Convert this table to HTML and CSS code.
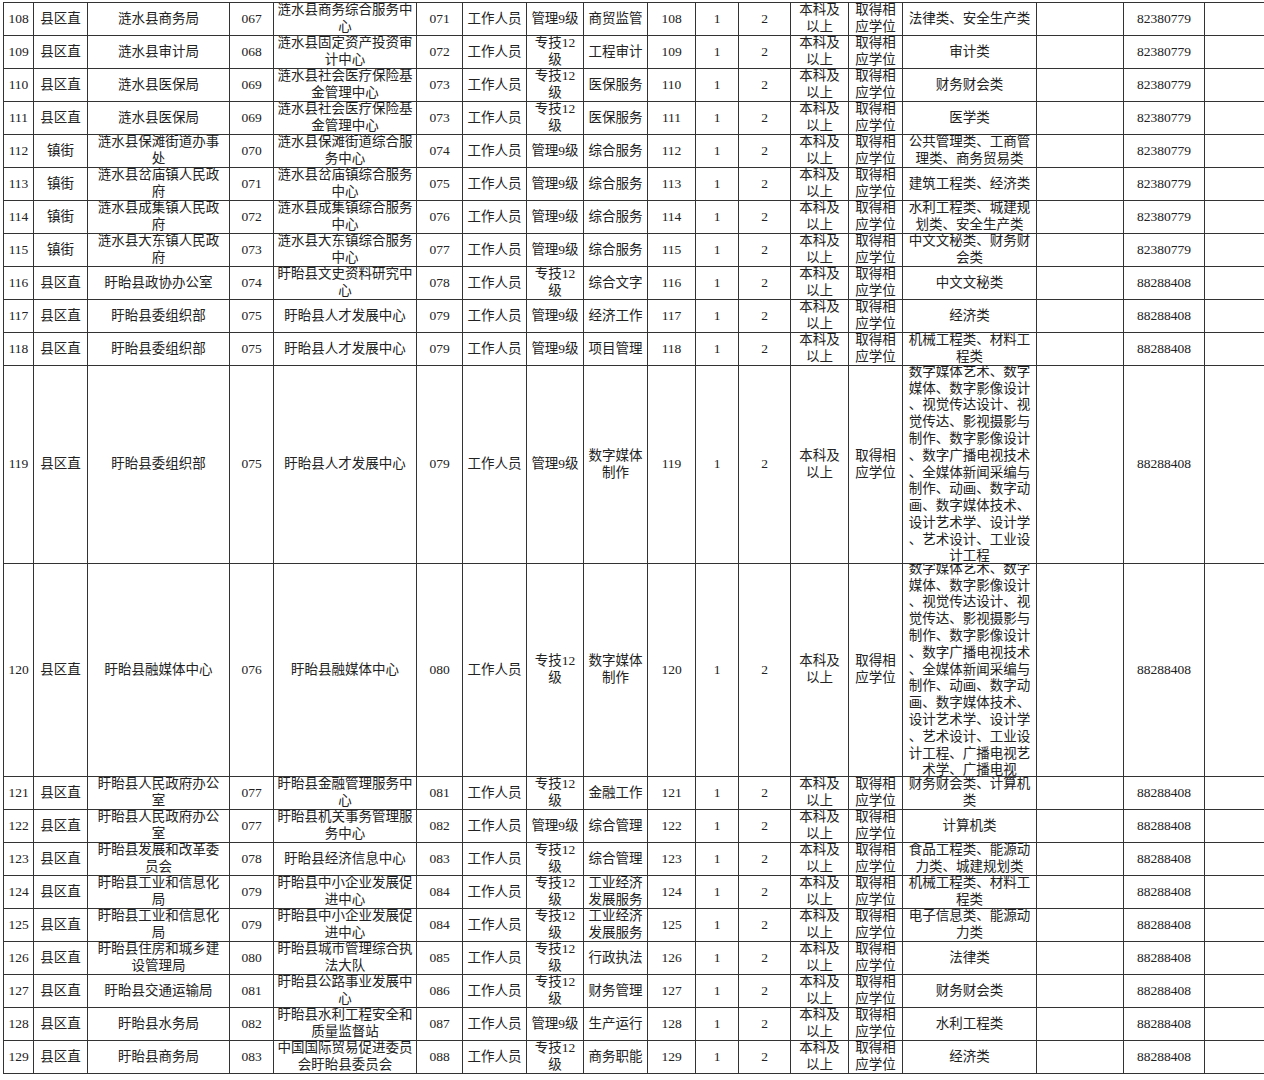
FILE: index.html
```html
<!DOCTYPE html>
<html lang="zh-CN">
<head>
<meta charset="utf-8">
<title>职位表</title>
<link rel="stylesheet" href="styles.css">
</head>
<body>
<div class="sheet">
<div>108</div><div>县区直</div><div>涟水县商务局</div><div>067</div><div>涟水县商务综合服务中<br>心</div><div>071</div><div>工作人员</div><div>管理9级</div><div>商贸监管</div><div>108</div><div>1</div><div>2</div><div>本科及<br>以上</div><div>取得相<br>应学位</div><div>法律类、安全生产类</div><div></div><div>82380779</div><div></div>
<div>109</div><div>县区直</div><div>涟水县审计局</div><div>068</div><div>涟水县固定资产投资审<br>计中心</div><div>072</div><div>工作人员</div><div>专技12<br>级</div><div>工程审计</div><div>109</div><div>1</div><div>2</div><div>本科及<br>以上</div><div>取得相<br>应学位</div><div>审计类</div><div></div><div>82380779</div><div></div>
<div>110</div><div>县区直</div><div>涟水县医保局</div><div>069</div><div>涟水县社会医疗保险基<br>金管理中心</div><div>073</div><div>工作人员</div><div>专技12<br>级</div><div>医保服务</div><div>110</div><div>1</div><div>2</div><div>本科及<br>以上</div><div>取得相<br>应学位</div><div>财务财会类</div><div></div><div>82380779</div><div></div>
<div>111</div><div>县区直</div><div>涟水县医保局</div><div>069</div><div>涟水县社会医疗保险基<br>金管理中心</div><div>073</div><div>工作人员</div><div>专技12<br>级</div><div>医保服务</div><div>111</div><div>1</div><div>2</div><div>本科及<br>以上</div><div>取得相<br>应学位</div><div>医学类</div><div></div><div>82380779</div><div></div>
<div>112</div><div>镇街</div><div>涟水县保滩街道办事<br>处</div><div>070</div><div>涟水县保滩街道综合服<br>务中心</div><div>074</div><div>工作人员</div><div>管理9级</div><div>综合服务</div><div>112</div><div>1</div><div>2</div><div>本科及<br>以上</div><div>取得相<br>应学位</div><div>公共管理类、工商管<br>理类、商务贸易类</div><div></div><div>82380779</div><div></div>
<div>113</div><div>镇街</div><div>涟水县岔庙镇人民政<br>府</div><div>071</div><div>涟水县岔庙镇综合服务<br>中心</div><div>075</div><div>工作人员</div><div>管理9级</div><div>综合服务</div><div>113</div><div>1</div><div>2</div><div>本科及<br>以上</div><div>取得相<br>应学位</div><div>建筑工程类、经济类</div><div></div><div>82380779</div><div></div>
<div>114</div><div>镇街</div><div>涟水县成集镇人民政<br>府</div><div>072</div><div>涟水县成集镇综合服务<br>中心</div><div>076</div><div>工作人员</div><div>管理9级</div><div>综合服务</div><div>114</div><div>1</div><div>2</div><div>本科及<br>以上</div><div>取得相<br>应学位</div><div>水利工程类、城建规<br>划类、安全生产类</div><div></div><div>82380779</div><div></div>
<div>115</div><div>镇街</div><div>涟水县大东镇人民政<br>府</div><div>073</div><div>涟水县大东镇综合服务<br>中心</div><div>077</div><div>工作人员</div><div>管理9级</div><div>综合服务</div><div>115</div><div>1</div><div>2</div><div>本科及<br>以上</div><div>取得相<br>应学位</div><div>中文文秘类、财务财<br>会类</div><div></div><div>82380779</div><div></div>
<div>116</div><div>县区直</div><div>盱眙县政协办公室</div><div>074</div><div>盱眙县文史资料研究中<br>心</div><div>078</div><div>工作人员</div><div>专技12<br>级</div><div>综合文字</div><div>116</div><div>1</div><div>2</div><div>本科及<br>以上</div><div>取得相<br>应学位</div><div>中文文秘类</div><div></div><div>88288408</div><div></div>
<div>117</div><div>县区直</div><div>盱眙县委组织部</div><div>075</div><div>盱眙县人才发展中心</div><div>079</div><div>工作人员</div><div>管理9级</div><div>经济工作</div><div>117</div><div>1</div><div>2</div><div>本科及<br>以上</div><div>取得相<br>应学位</div><div>经济类</div><div></div><div>88288408</div><div></div>
<div>118</div><div>县区直</div><div>盱眙县委组织部</div><div>075</div><div>盱眙县人才发展中心</div><div>079</div><div>工作人员</div><div>管理9级</div><div>项目管理</div><div>118</div><div>1</div><div>2</div><div>本科及<br>以上</div><div>取得相<br>应学位</div><div>机械工程类、材料工<br>程类</div><div></div><div>88288408</div><div></div>
<div>119</div><div>县区直</div><div>盱眙县委组织部</div><div>075</div><div>盱眙县人才发展中心</div><div>079</div><div>工作人员</div><div>管理9级</div><div>数字媒体<br>制作</div><div>119</div><div>1</div><div>2</div><div>本科及<br>以上</div><div>取得相<br>应学位</div><div>数字媒体艺术、数字<br>媒体、数字影像设计<br>、视觉传达设计、视<br>觉传达、影视摄影与<br>制作、数字影像设计<br>、数字广播电视技术<br>、全媒体新闻采编与<br>制作、动画、数字动<br>画、数字媒体技术、<br>设计艺术学、设计学<br>、艺术设计、工业设<br>计工程</div><div></div><div>88288408</div><div></div>
<div>120</div><div>县区直</div><div>盱眙县融媒体中心</div><div>076</div><div>盱眙县融媒体中心</div><div>080</div><div>工作人员</div><div>专技12<br>级</div><div>数字媒体<br>制作</div><div>120</div><div>1</div><div>2</div><div>本科及<br>以上</div><div>取得相<br>应学位</div><div>数字媒体艺术、数字<br>媒体、数字影像设计<br>、视觉传达设计、视<br>觉传达、影视摄影与<br>制作、数字影像设计<br>、数字广播电视技术<br>、全媒体新闻采编与<br>制作、动画、数字动<br>画、数字媒体技术、<br>设计艺术学、设计学<br>、艺术设计、工业设<br>计工程、广播电视艺<br>术学、广播电视</div><div></div><div>88288408</div><div></div>
<div>121</div><div>县区直</div><div>盱眙县人民政府办公<br>室</div><div>077</div><div>盱眙县金融管理服务中<br>心</div><div>081</div><div>工作人员</div><div>专技12<br>级</div><div>金融工作</div><div>121</div><div>1</div><div>2</div><div>本科及<br>以上</div><div>取得相<br>应学位</div><div>财务财会类、计算机<br>类</div><div></div><div>88288408</div><div></div>
<div>122</div><div>县区直</div><div>盱眙县人民政府办公<br>室</div><div>077</div><div>盱眙县机关事务管理服<br>务中心</div><div>082</div><div>工作人员</div><div>管理9级</div><div>综合管理</div><div>122</div><div>1</div><div>2</div><div>本科及<br>以上</div><div>取得相<br>应学位</div><div>计算机类</div><div></div><div>88288408</div><div></div>
<div>123</div><div>县区直</div><div>盱眙县发展和改革委<br>员会</div><div>078</div><div>盱眙县经济信息中心</div><div>083</div><div>工作人员</div><div>专技12<br>级</div><div>综合管理</div><div>123</div><div>1</div><div>2</div><div>本科及<br>以上</div><div>取得相<br>应学位</div><div>食品工程类、能源动<br>力类、城建规划类</div><div></div><div>88288408</div><div></div>
<div>124</div><div>县区直</div><div>盱眙县工业和信息化<br>局</div><div>079</div><div>盱眙县中小企业发展促<br>进中心</div><div>084</div><div>工作人员</div><div>专技12<br>级</div><div>工业经济<br>发展服务</div><div>124</div><div>1</div><div>2</div><div>本科及<br>以上</div><div>取得相<br>应学位</div><div>机械工程类、材料工<br>程类</div><div></div><div>88288408</div><div></div>
<div>125</div><div>县区直</div><div>盱眙县工业和信息化<br>局</div><div>079</div><div>盱眙县中小企业发展促<br>进中心</div><div>084</div><div>工作人员</div><div>专技12<br>级</div><div>工业经济<br>发展服务</div><div>125</div><div>1</div><div>2</div><div>本科及<br>以上</div><div>取得相<br>应学位</div><div>电子信息类、能源动<br>力类</div><div></div><div>88288408</div><div></div>
<div>126</div><div>县区直</div><div>盱眙县住房和城乡建<br>设管理局</div><div>080</div><div>盱眙县城市管理综合执<br>法大队</div><div>085</div><div>工作人员</div><div>专技12<br>级</div><div>行政执法</div><div>126</div><div>1</div><div>2</div><div>本科及<br>以上</div><div>取得相<br>应学位</div><div>法律类</div><div></div><div>88288408</div><div></div>
<div>127</div><div>县区直</div><div>盱眙县交通运输局</div><div>081</div><div>盱眙县公路事业发展中<br>心</div><div>086</div><div>工作人员</div><div>专技12<br>级</div><div>财务管理</div><div>127</div><div>1</div><div>2</div><div>本科及<br>以上</div><div>取得相<br>应学位</div><div>财务财会类</div><div></div><div>88288408</div><div></div>
<div>128</div><div>县区直</div><div>盱眙县水务局</div><div>082</div><div>盱眙县水利工程安全和<br>质量监督站</div><div>087</div><div>工作人员</div><div>管理9级</div><div>生产运行</div><div>128</div><div>1</div><div>2</div><div>本科及<br>以上</div><div>取得相<br>应学位</div><div>水利工程类</div><div></div><div>88288408</div><div></div>
<div>129</div><div>县区直</div><div>盱眙县商务局</div><div>083</div><div>中国国际贸易促进委员<br>会盱眙县委员会</div><div>088</div><div>工作人员</div><div>专技12<br>级</div><div>商务职能</div><div>129</div><div>1</div><div>2</div><div>本科及<br>以上</div><div>取得相<br>应学位</div><div>经济类</div><div></div><div>88288408</div><div></div>
</div>
</body>
</html>
```
FILE: styles.css
```css
html, body {
  margin: 0;
  padding: 0;
  background: #fff;
  overflow: hidden;
}

body {
  font-family: "Liberation Serif", "Noto Sans CJK SC", serif;
  font-size: 13.5px;
  color: #222;
}

.sheet {
  display: grid;
  width: max-content;
  margin: 2px 0 0 3px;
  padding: 1px;
  gap: 1px;
  background: #333;
  grid-template-columns: 29px 53px 141px 43px 142px 45px 63px 56px 63px 47px 42px 51px 57px 53px 133px 86px 80px 80px;
  grid-template-rows: repeat(11, 32px) 197px 212px repeat(9, 32px);
}

.sheet > div {
  background: #fff;
  display: flex;
  align-items: center;
  justify-content: center;
  text-align: center;
  white-space: nowrap;
  overflow: hidden;
  line-height: 16.8px;
}
```
